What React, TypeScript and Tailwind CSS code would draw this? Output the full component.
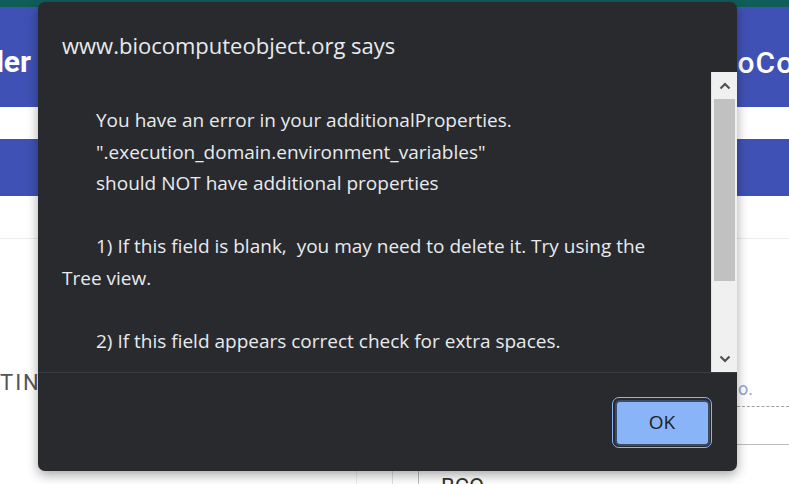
export default function App() {
  const font = { fontFamily: '"Open Sans", "Noto Sans", sans-serif' }

  return (
    <div className="relative w-[789px] h-[484px] overflow-hidden bg-white" style={{ fontFamily: 'Roboto, sans-serif' }}>
      {/* page behind the alert */}
      <div className="h-[7px] bg-[#0f5e5a]" />
      <header className="h-[100px] bg-[#3f51b5] flex items-center justify-between text-white">
        <div className="w-[31px] flex justify-end whitespace-nowrap">
          <span className="text-[30px] font-bold pt-[8px]">BCO Builder</span>
        </div>
        <div className="w-[80px] overflow-hidden whitespace-nowrap pt-[10px]">
          <span className="text-[30px] font-medium tracking-[1px]">BioCompute Object</span>
        </div>
      </header>
      <div className="h-[32px]" />
      <div className="h-[57px] bg-[#3f51b5]" />
      <div className="h-[43px] border-b border-[#ececec]" />

      <div className="flex pt-[132px]">
        <div className="w-[393px] flex">
          <div className="w-[38px] whitespace-nowrap">
            <span className="text-[22px] text-[#555] tracking-[2px] leading-[24px]">TING</span>
          </div>
        </div>
        <div className="flex-1 flex justify-end">
          <div className="w-[52px]">
            <div className="h-[36px] flex items-end pl-[1px] text-[#9aa3c9] text-[18px] leading-[22px] border-b border-dashed border-[#9e9e9e]">
              <span className="pb-[6px]">o.</span>
            </div>
          </div>
        </div>
      </div>
      <div className="flex h-[38px]">
        <div className="w-[419px]" />
        <div className="flex-1 border-b border-[#bdbdbd]" />
      </div>
      <div className="flex h-[40px]">
        <div className="w-[357px] border-r border-[#eee]" />
        <div className="w-[36px] border-r border-[#e0e0e0]" />
        <div className="w-[26px] border-r border-[#bdbdbd]" />
        <div className="pl-[22px] pt-[31px] text-[22px] text-[#333] leading-none">BCO</div>
      </div>

      {/* alert dialog */}
      <div
        className="absolute left-[38px] top-[2px] w-[699px] h-[469px] rounded-[7px] bg-[#292a2d] shadow-[0_4px_12px_rgba(0,0,0,0.35)] flex flex-col text-[#e8eaed]"
        style={font}
      >
        <div className="h-[70px] pl-[24px] pt-[28px] text-[22px] leading-[30px]">
          www.biocomputeobject.org says
        </div>
        <div className="h-[300px] flex">
          <div className="flex-1 overflow-hidden pl-[24px] pr-[40px] pt-[33px] text-[19px] leading-[31.5px] whitespace-pre-wrap">
            <div className="indent-[34px]">You have an error in your additionalProperties.</div>
            <div className="indent-[34px]">".execution_domain.environment_variables"</div>
            <div className="indent-[34px]">should NOT have additional properties</div>
            <div>&nbsp;</div>
            <div className="indent-[34px]">1) If this field is blank,  you may need to delete it. Try using the Tree view.</div>
            <div>&nbsp;</div>
            <div className="indent-[34px]">2) If this field appears correct check for extra spaces.</div>
            <div>&nbsp;</div>
            <div className="indent-[34px]">3) If this field is required, please fill it in.</div>
          </div>
          <div className="w-[26px] bg-[#f0f0f0] border-l border-[#e2e2e2] flex flex-col">
            <div className="h-[27px] flex items-center justify-center">
              <svg width="12" height="8" viewBox="0 0 12 8">
                <path d="M1.5 6.5 L6 2 L10.5 6.5" fill="none" stroke="#505050" strokeWidth="2.2" />
              </svg>
            </div>
            <div className="mx-[2px] h-[182px] bg-[#c1c1c1]" />
            <div className="flex-1" />
            <div className="h-[27px] flex items-center justify-center">
              <svg width="12" height="8" viewBox="0 0 12 8">
                <path d="M1.5 1.5 L6 6 L10.5 1.5" fill="none" stroke="#505050" strokeWidth="2.2" />
              </svg>
            </div>
          </div>
        </div>
        <div className="h-px bg-[#3c3d41]" />
        <div className="flex-1 flex justify-end items-start pt-[24px] pr-[25px]">
          <button className="w-[100px] h-[51px] rounded-[7px] border-[1.5px] border-[#8ab4f8] p-[1.5px]">
            <span className="flex w-full h-full items-center justify-center rounded-[5px] border-2 border-[#3b4b66] bg-[#8ab4f8] text-[#202124] text-[19px]">
              OK
            </span>
          </button>
        </div>
      </div>
    </div>
  )
}
